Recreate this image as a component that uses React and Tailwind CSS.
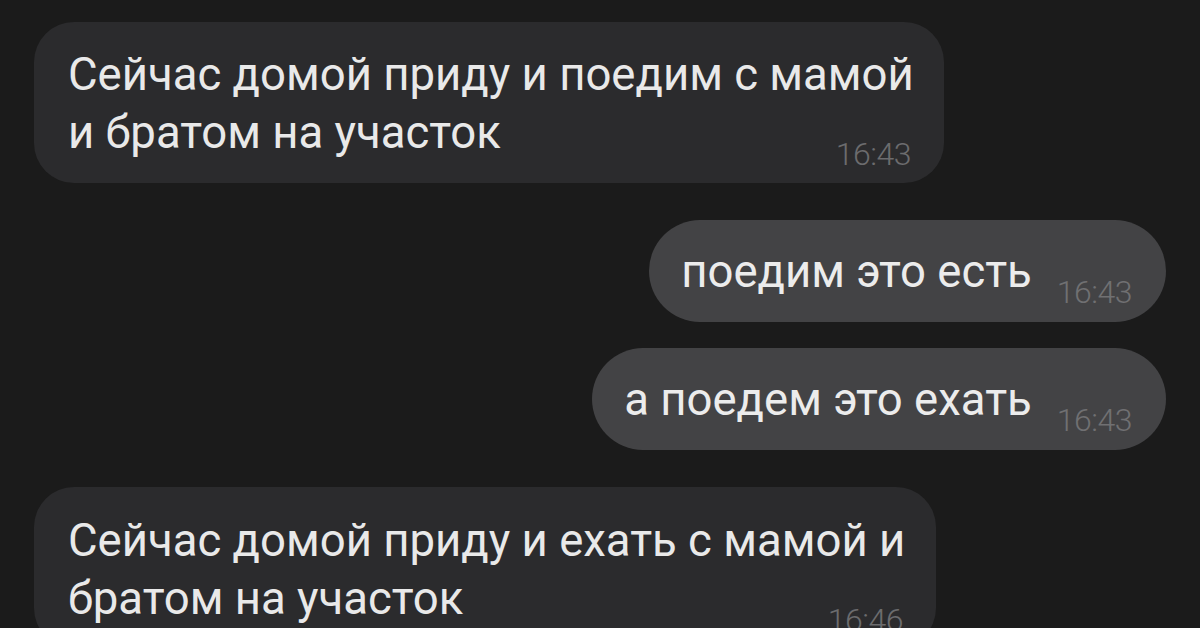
import React from 'react';

/**
 * Chat screenshot: two incoming bubbles (left) and two outgoing bubbles (right).
 */
const Time = ({ children, className = '' }) => (
  <span className={`text-[32px] leading-[36px] font-light text-[#6c6c6e] tracking-[-0.5px] ${className}`}>
    {children}
  </span>
);

const Incoming = ({ lines, time, className = '' }) => (
  <div className={`self-start flex flex-col bg-[#2b2b2d] rounded-[40px] pl-[34px] pr-[33px] ${className}`}>
    <div className="text-[45.5px] leading-[58px] text-[#e9e9e9] whitespace-nowrap">
      {lines.map((l, i) => (
        <div key={i}>{l}</div>
      ))}
    </div>
    <Time className="self-end -mt-[26px]">{time}</Time>
  </div>
);

const Outgoing = ({ text, time, className = '' }) => (
  <div className={`self-end flex items-end gap-[25px] bg-[#434345] rounded-[51px] pl-[32px] pr-[34px] pt-[23px] pb-[21px] ${className}`}>
    <span className="text-[45.5px] leading-[58px] text-[#ececec] whitespace-nowrap">{text}</span>
    <Time className="-mb-[9px] text-[#707072]">{time}</Time>
  </div>
);

export default function App() {
  return (
    <div
      className="w-[1200px] h-[628px] overflow-hidden bg-[#1b1b1b] flex flex-col px-[34px] pt-[22px]"
      style={{ fontFamily: 'Roboto, "Noto Sans", sans-serif' }}
    >
      <Incoming
        className="w-[910px] pt-[24px] pb-[11px]"
        lines={['Сейчас домой приду и поедим с мамой', 'и братом на участок']}
        time="16:43"
      />
      <Outgoing className="mt-[37px]" text="поедим это есть" time="16:43" />
      <Outgoing className="mt-[26px]" text="а поедем это ехать" time="16:43" />
      <Incoming
        className="w-[902px] mt-[37px] pt-[25px] pb-[10px] shrink-0"
        lines={['Сейчас домой приду и ехать с мамой и', 'братом на участок']}
        time="16:46"
      />
    </div>
  );
}
